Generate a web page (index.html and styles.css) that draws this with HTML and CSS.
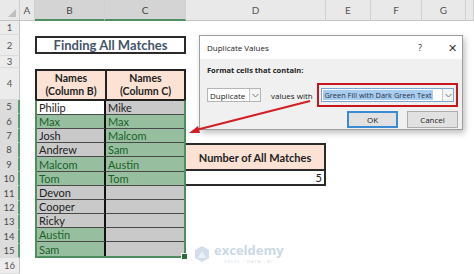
FILE: index.html
```html
<!DOCTYPE html>
<html lang="en">
  <head>
    <meta charset="UTF-8" />
    <meta name="viewport" content="width=device-width, initial-scale=1.0" />
    <title>Finding All Matches</title>
    <link rel="stylesheet" href="styles.css">
  </head>
  <body>
    <div class="sheet">
      <!-- column headers -->
      <div class="ch corner"><span class="tri"></span></div>
      <div class="ch">A</div>
      <div class="ch sel">B</div>
      <div class="ch sel">C</div>
      <div class="ch">D</div>
      <div class="ch">E</div>
      <div class="ch">F</div>
      <div class="ch">G</div>
      <div class="ch"></div>

      <!-- row headers -->
      <div class="rh">1</div>
      <div class="rh">2</div>
      <div class="rh">3</div>
      <div class="rh">4</div>
      <div class="rh sel">5</div>
      <div class="rh sel">6</div>
      <div class="rh sel">7</div>
      <div class="rh sel">8</div>
      <div class="rh sel">9</div>
      <div class="rh sel">10</div>
      <div class="rh sel">11</div>
      <div class="rh sel">12</div>
      <div class="rh sel">13</div>
      <div class="rh sel">14</div>
      <div class="rh sel">15</div>
      <div class="rh">16</div>

      <div class="title">Finding All Matches</div>

      <div class="names">
        <div class="names-head">
          <div class="hcell">Names<br />(Column B)</div>
          <div class="hcell">Names<br />(Column C)</div>
        </div>
        <div class="names-body">
          <div class="cell b active">Philip</div>
          <div class="cell gray">Mike</div>
          <div class="cell b green">Max</div>
          <div class="cell green">Max</div>
          <div class="cell b gray">Josh</div>
          <div class="cell green">Malcom</div>
          <div class="cell b gray">Andrew</div>
          <div class="cell green">Sam</div>
          <div class="cell b green">Malcom</div>
          <div class="cell green">Austin</div>
          <div class="cell b green">Tom</div>
          <div class="cell green">Tom</div>
          <div class="cell b gray">Devon</div>
          <div class="cell gray"></div>
          <div class="cell b gray">Cooper</div>
          <div class="cell gray"></div>
          <div class="cell b gray">Ricky</div>
          <div class="cell gray"></div>
          <div class="cell b green">Austin</div>
          <div class="cell gray"></div>
          <div class="cell b green">Sam</div>
          <div class="cell gray"></div>
        </div>
      </div>

      <div class="matches">
        <div class="matches-head">Number of All Matches</div>
        <div class="matches-value">5</div>
      </div>
    </div>

    <!-- Duplicate Values dialog -->
    <div class="dialog">
      <div class="dialog-title">
        <span>Duplicate Values</span>
        <span class="help">?</span>
        <span class="close">&#x2715;</span>
      </div>
      <div class="dialog-body">
        <div class="label">Format cells that contain:</div>
        <div class="dialog-row">
          <div class="combo small">
            <span class="combo-text">Duplicate</span>
            <span class="drop">
              <svg width="7" height="5" viewBox="0 0 7 5"><path d="M0.5 1 L3.5 4 L6.5 1" fill="none" stroke="#777" stroke-width="1"/></svg>
            </span>
          </div>
          <span class="with">values with</span>
          <div class="highlight">
            <div class="combo wide">
              <span class="combo-text"><span class="picked">Green Fill with Dark Green Text</span></span>
              <span class="drop">
                <svg width="7" height="5" viewBox="0 0 7 5"><path d="M0.5 1 L3.5 4 L6.5 1" fill="none" stroke="#777" stroke-width="1"/></svg>
              </span>
            </div>
          </div>
        </div>
        <div class="buttons">
          <button class="btn primary">OK</button>
          <button class="btn">Cancel</button>
        </div>
      </div>
    </div>

    <svg class="arrow" width="474" height="274" viewBox="0 0 474 274">
      <line x1="310" y1="101" x2="196" y2="130" stroke="#d01f25" stroke-width="2" />
      <path d="M189 133 L198 126 L200 133 Z" fill="#d01f25" />
    </svg>

    <div class="watermark">
      <svg width="18" height="18" viewBox="0 0 18 18">
        <path d="M9 1 L16 5 L16 13 L9 17 L2 13 L2 5 Z" fill="#d3deec" />
        <path d="M5 13 L9 6 L13 13 Z" fill="#eef2f8" />
      </svg>
      <div class="wm-text">
        <div class="wm-name">exceldemy</div>
        <div class="wm-sub">EXCEL · DATA · BI</div>
      </div>
    </div>
  </body>
</html>
```

FILE: styles.css
```css
* {
  box-sizing: border-box;
}

body {
  margin: 0;
  width: 474px;
  height: 274px;
  overflow: hidden;
  position: relative;
  background: #fff;
  font-family: Lato, "Liberation Sans", sans-serif;
  color: #222;
}

.sheet {
  display: grid;
  grid-template-columns: 20px 15px 70px 81px 140px 45px 51px 44px 1fr;
  grid-template-rows: 21px 14px 21px 12px 32px repeat(11, 14.4px) 1fr;
  height: 274px;
}

/* headers */
.ch {
  background: #e9e9e9;
  border-right: 1px solid #cfcfcf;
  border-bottom: 1px solid #c4c4c4;
  color: #555;
  font-size: 10px;
  display: flex;
  align-items: center;
  justify-content: center;
}

.ch.sel {
  background: #d4d4d4;
  border-bottom: 2px solid #4f8f5f;
  color: #444;
}

.corner {
  position: relative;
}

.tri {
  position: absolute;
  right: 3px;
  bottom: 3px;
  width: 0;
  height: 0;
  border-left: 8px solid transparent;
  border-bottom: 8px solid #c0c0c0;
}

.rh {
  grid-column: 1;
  background: #ececec;
  border-right: 1px solid #c4c4c4;
  border-bottom: 1px solid #dcdcdc;
  color: #555;
  font-size: 9.5px;
  display: flex;
  align-items: center;
  justify-content: center;
}

.rh.sel {
  background: #dcdcdc;
  border-right: 2px solid #5e9a6c;
  color: #4a4a4a;
}

/* title */
.title {
  grid-column: 3 / 5;
  grid-row: 3;
  margin: 1px 0 2px;
  border: 2px solid #2a2a2a;
  color: #44546a;
  font-weight: bold;
  font-size: 13px;
  display: flex;
  align-items: center;
  justify-content: center;
}

/* names table */
.names {
  grid-column: 3 / 5;
  grid-row: 5 / 17;
  display: grid;
  grid-template-rows: 32px 1fr;
}

.names-head {
  display: grid;
  grid-template-columns: 70px 1fr;
  border: 2px solid #222;
  border-bottom-width: 1px;
  margin-top: 1px;
}

.hcell {
  background: #fbe2d4;
  font-weight: bold;
  font-size: 10.5px;
  line-height: 13px;
  text-align: center;
  display: flex;
  align-items: center;
  justify-content: center;
}

.hcell:first-child {
  border-right: 2px solid #222;
}

.names-body {
  position: relative;
  display: grid;
  grid-template-columns: 69px 1fr;
  grid-template-rows: repeat(11, 1fr);
  border: 2px solid #4f8f5f;
  border-top: 1px solid #222;
}

.names-body::after {
  content: "";
  position: absolute;
  right: -4px;
  bottom: -4px;
  width: 5px;
  height: 5px;
  background: #2e6b3e;
  border: 1px solid #fff;
}

.cell {
  font-size: 11px;
  padding-left: 2px;
  display: flex;
  align-items: center;
  border-bottom: 1px solid #4a4a4a;
  white-space: nowrap;
}

.cell:nth-last-child(-n+2) {
  border-bottom: none;
}

.cell.b {
  border-right: 2px solid #111;
}

.active {
  background: #fff;
}

.gray {
  background: #c9c9c9;
}

.green {
  background: #97bf9f;
  color: #1a6129;
}

/* matches box */
.matches {
  grid-column: 5;
  grid-row: 9 / 12;
  display: grid;
  grid-template-rows: 2fr 1fr;
  border: 2px solid #2a2a2a;
  border-left: none;
}

.matches-head {
  background: #fbe2d4;
  border-bottom: 2px solid #2a2a2a;
  font-weight: bold;
  font-size: 11px;
  display: flex;
  align-items: center;
  justify-content: center;
}

.matches-value {
  font-size: 11px;
  padding-right: 2px;
  display: flex;
  align-items: center;
  justify-content: flex-end;
}

/* dialog */
.dialog {
  position: absolute;
  left: 199px;
  top: 35px;
  width: 264px;
  height: 95px;
  background: #f0f0f0;
  border: 1px solid #9d9d9d;
  box-shadow: 2px 3px 6px rgba(0, 0, 0, 0.25);
  font-family: "Open Sans", "Noto Sans", sans-serif;
  font-size: 8px;
  color: #222;
  display: flex;
  flex-direction: column;
}

.dialog-title {
  background: #fff;
  height: 23px;
  padding-left: 7px;
  display: flex;
  align-items: center;
}

.dialog-title span:first-child {
  flex: 1;
}

.help {
  width: 30px;
  font-size: 9px;
  color: #333;
}

.close {
  width: 14px;
  font-size: 11px;
  color: #333;
}

.dialog-body {
  padding: 2px 4px 0 7px;
  display: flex;
  flex-direction: column;
}

.label {
  font-weight: bold;
  font-size: 7.5px;
  margin-top: 4px;
}

.dialog-row {
  display: flex;
  align-items: center;
  margin-top: 8px;
}

.combo {
  display: flex;
  align-items: stretch;
  height: 14px;
  background: #fff;
  border: 1px solid #b5b5b5;
}

.combo-text {
  display: flex;
  align-items: center;
  padding-left: 2px;
  white-space: nowrap;
  overflow: hidden;
}

.combo.small .combo-text {
  width: 41px;
}

.drop {
  width: 11px;
  flex: none;
  display: flex;
  align-items: center;
  justify-content: center;
  background: #f4f4f4;
  border-left: 1px solid #c8c8c8;
}

.with {
  margin-left: 10px;
  width: 48px;
}

.highlight {
  border: 2px solid #c8161d;
  padding: 3px 2px;
  width: 145px;
}

.combo.wide {
  border-color: #7aa6d0;
}

.combo.wide .combo-text {
  flex: 1;
  padding-left: 1px;
}

.picked {
  background: #a9cdef;
  color: #1c2f4a;
  font-size: 7.4px;
  line-height: 10px;
  padding: 0 1px;
}

.buttons {
  display: flex;
  justify-content: flex-end;
  gap: 9px;
  margin-top: 4px;
}

.btn {
  width: 51px;
  height: 17px;
  font-family: "Open Sans", "Noto Sans", sans-serif;
  font-size: 8px;
  color: #222;
  background: #e1e1e1;
  border: 1px solid #adadad;
  padding: 0;
}

.btn.primary {
  border: 2px solid #3b8ad4;
}

.arrow {
  position: absolute;
  left: 0;
  top: 0;
  pointer-events: none;
}

/* watermark */
.watermark {
  position: absolute;
  left: 193px;
  top: 242px;
  display: flex;
  align-items: center;
  gap: 3px;
}

.wm-text {
  display: flex;
  flex-direction: column;
  align-items: center;
}

.wm-name {
  font-family: "Open Sans", sans-serif;
  font-weight: bold;
  font-size: 13px;
  line-height: 17px;
  color: #ccd8e6;
}

.wm-sub {
  font-family: "Open Sans", sans-serif;
  font-size: 4px;
  line-height: 6px;
  letter-spacing: 1px;
  color: #ccd8e6;
}
```
